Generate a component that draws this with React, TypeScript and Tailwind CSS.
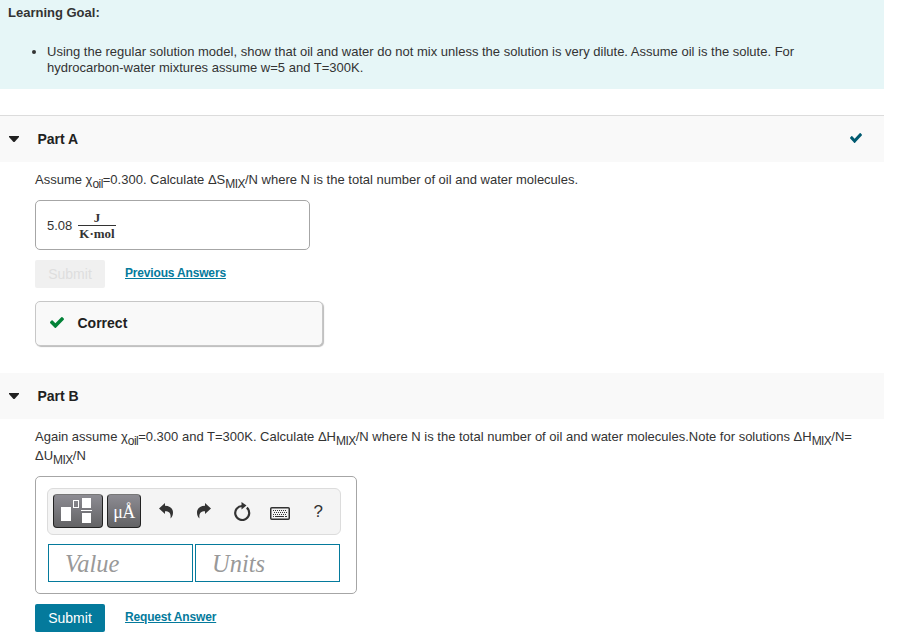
import type { ReactNode } from "react";

const CHECK =
  "M1671 566q0 40-28 68l-724 724-136 136q-28 28-68 28t-68-28l-136-136-362-362q-28-28-28-68t28-68l136-136q28-28 68-28t68 28l294 295 656-657q28-28 68-28t68 28l136 136q28 28 28 68z";

function Check({ className }: { className: string }) {
  return (
    <svg viewBox="121 334 1550 1188" preserveAspectRatio="none" className={className} fill="currentColor">
      <path d={CHECK} />
    </svg>
  );
}

function Sub({ children }: { children: ReactNode }) {
  return <span className="relative top-[4px] text-[12px] leading-none tracking-[-0.55px]">{children}</span>;
}

function PartHeader({ title, done = false }: { title: string; done?: boolean }) {
  return (
    <header className="flex h-[46px] items-center bg-[#f9f9f9] pl-[9px] pr-[22px] text-[#212121]">
      <svg viewBox="0 0 10 6" className="h-[6px] w-[10px]" fill="currentColor">
        <path d="M0 0h10v1L6 5.400Q5 6.400 4 5.400L0 1z" />
      </svg>
      <h2 className="ml-[18.5px] text-[14px] font-bold leading-[18px]">{title}</h2>
      {done && <Check className="mb-[2px] ml-auto h-[10px] w-[12px] text-[#005a70]" />}
    </header>
  );
}

function Curve({ flip = false }: { flip?: boolean }) {
  return (
    <svg viewBox="0 0 14 16" className={flip ? "h-[16px] w-[14px] -scale-x-100" : "h-[16px] w-[14px]"} fill="#333">
      <path d="M0 5.500L6 0v2.800C11 3 14 5.500 14 9.500C14 12 13.300 13.800 11.500 15.500C12.200 10.700 10.500 8.300 6 8.300V11z" />
    </svg>
  );
}

function Reset() {
  return (
    <svg viewBox="0 0 18 19" className="h-[19px] w-[18px]" fill="none">
      <path d="M9.500 4A7 7 0 1 0 13.800 5.700" stroke="#333" strokeWidth="2.200" />
      <path d="M8.500 0l5 3.600L8.500 7.400z" fill="#333" />
    </svg>
  );
}

function Keyboard() {
  return (
    <svg viewBox="0 0 20 13" className="h-[13px] w-[20px]" fill="none" stroke="#333">
      <rect x=".75" y=".75" width="18.500" height="11.500" rx="1" strokeWidth="1.500" />
      <path d="M3 3.500h14M4 5.500h13M3 7.500h14" strokeDasharray="1 1" />
      <path d="M3 9.500h1M5 9.500h9M15 9.500h2" />
    </svg>
  );
}

function Templates() {
  return (
    <svg viewBox="0 0 32 27" className="h-[27px] w-[32px] shrink-0" fill="#fff">
      <rect x="1" y="10" width="10" height="14" />
      <rect x="13.500" y="3.500" width="5" height="7" fill="none" stroke="#fff" />
      <rect x="22" y="1" width="9" height="10" />
      <rect x="21" y="13" width="11" height="1" />
      <rect x="22" y="16" width="9" height="10" />
    </svg>
  );
}

export default function App() {
  return (
    <div className="h-[644px] w-[900px] overflow-hidden bg-white font-['Liberation_Sans',Arial,sans-serif] text-[13px] leading-[16px] text-[#333]">
      <main className="w-[884px]">
        <section className="h-[89px] bg-[#e6f6f7] pl-[8px] pt-[5px]">
          <h1 className="font-bold">Learning Goal:</h1>
          <ul className="mt-[23px] list-disc pl-[39px]">
            <li>
              <p className="whitespace-nowrap">Using the regular solution model, show that oil and water do not mix unless the solution is very dilute. Assume oil is the solute. For</p>
              <p className="whitespace-nowrap">hydrocarbon-water mixtures assume w=5 and T=300K.</p>
            </li>
          </ul>
        </section>

        <section className="mt-[26px] border-t border-[#dcdcdc]">
          <PartHeader title="Part A" done />
          <div className="pl-[35px] pt-[10px]">
            <p className="whitespace-nowrap">
              Assume χ<Sub>oil</Sub>=0.300. Calculate ΔS<Sub>MIX</Sub>/N where N is the total number of oil and water molecules.
            </p>
            <div className="mt-[12px] flex h-[50px] w-[275px] items-center rounded-[5px] border border-[#a6a6a6] pl-[11px]">
              <span className="mt-[2px] w-[25px] text-[13px]">5.08</span>
              <span className="ml-[6px] mt-[1px] flex flex-col items-center font-['Liberation_Serif',serif] text-[13px] font-bold leading-[15px]">
                <span className="flex h-[16px] w-[38px] justify-center border-b border-[#333]">J</span>
                <span>K·mol</span>
              </span>
            </div>
            <div className="mt-[10px] flex">
              <button className="h-[28px] w-[70px] rounded-[2px] bg-[#f0f0f0] text-[14px] text-[#dedede]">Submit</button>
              <a className="ml-[20px] mt-[5px] text-[12px] font-bold tracking-[-0.17px] text-[#047a9c] underline underline-offset-1">Previous Answers</a>
            </div>
            <div className="mt-[13px] flex h-[45px] w-[288px] items-center rounded-[5px] border border-[#c7c7c7] bg-[#f9f9f9] pb-[2px] pl-[14px] text-[#212121] shadow-[1px_1px_1px_#bbb]">
              <Check className="h-[11px] w-[14px] text-[#038238]" />
              <strong className="ml-[13.5px] text-[14px]">Correct</strong>
            </div>
          </div>
        </section>

        <section className="mt-[27px]">
          <PartHeader title="Part B" />
          <div className="pl-[35px] pt-[8px] leading-[19px]">
            <p className="whitespace-nowrap">
              Again assume χ<Sub>oil</Sub>=0.300 and T=300K. Calculate ΔH<Sub>MIX</Sub>/N where N is the total number of oil and water molecules.Note for solutions ΔH<Sub>MIX</Sub>/N=
            </p>
            <p>ΔU<Sub>MIX</Sub>/N</p>
            <div className="mt-[11px] h-[118px] w-[322px] rounded-[5px] border border-[#a6a6a6] pl-[11px] pt-[11px]">
              <div className="flex h-[47px] w-[294px] items-center rounded-[6px] border border-[#dcdcdc] bg-[#f4f4f4] pl-[5px]">
                <button className="mb-[2px] flex h-[34px] w-[50px] items-center rounded-[4px] border border-[#222] border-t-[#777] bg-linear-to-b from-[#8d8c93] to-[#636365] pl-[6px]">
                  <Templates />
                </button>
                <button className="mb-[2px] ml-[4px] flex h-[34px] w-[34px] items-center justify-center rounded-[4px] border border-[#222] border-t-[#777] bg-linear-to-b from-[#8d8c93] to-[#636365] pt-[4px] font-['Liberation_Serif',serif] text-[18px] tracking-[-0.5px] text-white">
                  μÅ
                </button>
                <span className="mb-[1px] ml-[17.5px]"><Curve /></span>
                <span className="mb-[1px] ml-[24px]"><Curve flip /></span>
                <span className="mb-[1px] ml-[22px]"><Reset /></span>
                <span className="ml-[19.5px] mt-[3px]"><Keyboard /></span>
                <span className="ml-[23.5px] text-[17px]">?</span>
              </div>
              <div className="ml-[1px] mt-[9px] flex gap-[2px] font-['Liberation_Serif',serif] text-[24.5px] italic text-[#999]">
                <div className="flex h-[38px] w-[145px] items-center border border-[#047a9c] pl-[16px]">Value</div>
                <div className="flex h-[38px] w-[145px] items-center border border-[#047a9c] pl-[16px]">Units</div>
              </div>
            </div>
            <div className="mt-[10px] flex leading-[16px]">
              <button className="h-[28px] w-[70px] rounded-[2px] bg-[#047a9c] text-[14px] text-white">Submit</button>
              <a className="ml-[20px] mt-[5px] text-[12px] font-bold tracking-[-0.17px] text-[#047a9c] underline underline-offset-1">Request Answer</a>
            </div>
          </div>
        </section>
      </main>
    </div>
  );
}
